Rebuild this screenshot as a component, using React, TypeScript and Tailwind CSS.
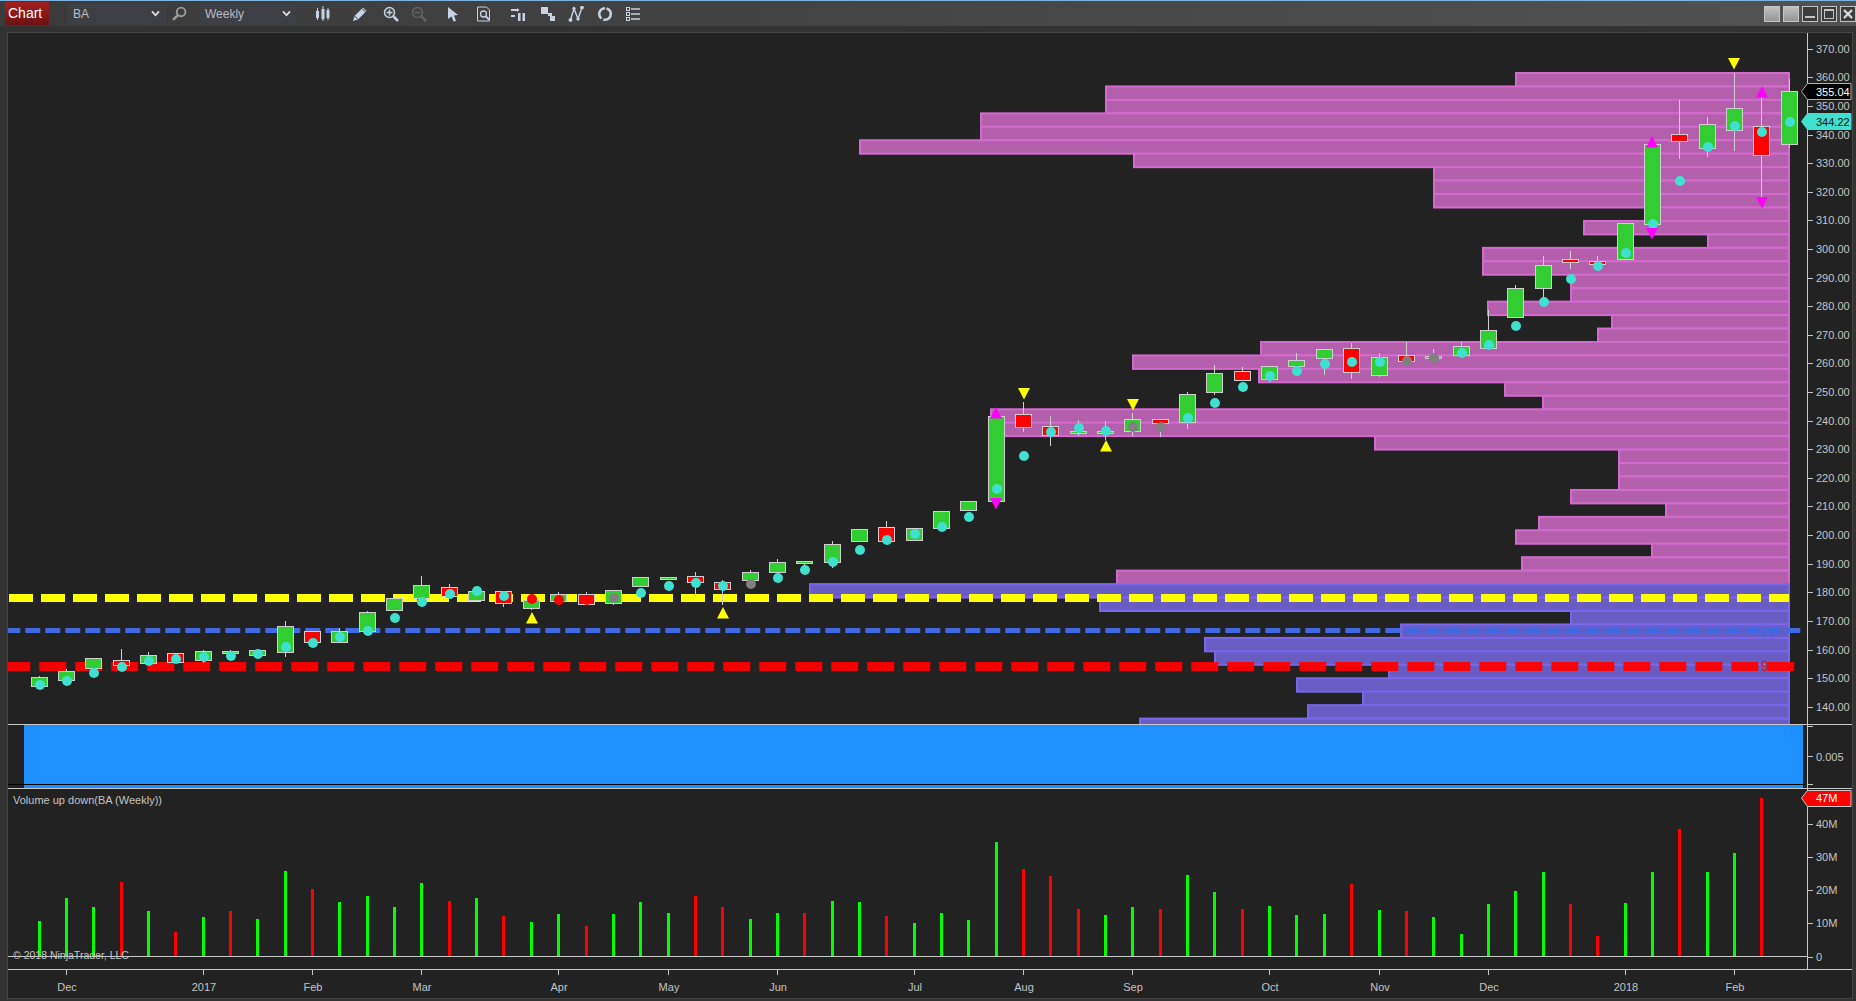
// Weekly BA chart, NinjaTrader dark skin
const FONT = "font-['Liberation_Sans',Arial,sans-serif]";

const candleX = (i: number) => Math.floor(39.1 + 27.345 * i);

const PROFILE_RIGHT = 1789;
const ROW = 13.45;
// left edge of each volume profile row, top to bottom; first 38 rows are up volume
const profileLefts = [
  1515, 1105, 1105, 980, 980, 859, 1133, 1433, 1433, 1433, 1650, 1583, 1707, 1482, 1482, 1570, 1570, 1487, 1611,
  1597, 1260, 1132, 1258, 1504, 1542, 990, 990, 1374, 1618, 1618, 1618, 1570, 1665, 1538, 1515, 1651, 1521, 1116,
  809, 1099, 1570, 1400, 1204, 1214, 1388, 1296, 1362, 1307, 1139,
];

type Candle = {
  t: number;
  b: number;
  wt?: number;
  wb?: number;
  c: "g" | "r";
  dot: number;
  dc?: string;
};

const candles: Candle[] = [
  { t: 677, b: 686, wt: 676, c: "g", dot: 685 },
  { t: 671, b: 680, wt: 669, c: "g", dot: 681 },
  { t: 658, b: 668, c: "g", dot: 673 },
  { t: 660, b: 665, wt: 649, c: "r", dot: 667 },
  { t: 655, b: 663, wt: 652, c: "g", dot: 661 },
  { t: 653, b: 662, c: "r", dot: 659 },
  { t: 651, b: 660, wt: 650, wb: 663, c: "g", dot: 657 },
  { t: 651, b: 653, wt: 650, c: "g", dot: 656 },
  { t: 650, b: 655, c: "g", dot: 654 },
  { t: 626, b: 652, wt: 621, wb: 657, c: "g", dot: 647 },
  { t: 631, b: 642, c: "r", dot: 643 },
  { t: 631, b: 642, wt: 628, wb: 643, c: "g", dot: 637 },
  { t: 612, b: 631, wt: 611, c: "g", dot: 631 },
  { t: 598, b: 610, c: "g", dot: 618 },
  { t: 585, b: 598, wt: 576, c: "g", dot: 602 },
  { t: 587, b: 596, wt: 584, c: "r", dot: 594 },
  { t: 591, b: 600, wb: 601, c: "g", dot: 591 },
  { t: 591, b: 603, wb: 607, c: "r", dot: 596 },
  { t: 600, b: 608, wb: 610, c: "g", dot: 599, dc: "#ff0000" },
  { t: 594, b: 601, wt: 592, c: "g", dot: 600, dc: "#ff0000" },
  { t: 594, b: 604, wt: 592, c: "r", dot: 600, dc: "#ff0000" },
  { t: 590, b: 603, wb: 605, c: "g", dot: 598, dc: "#808080" },
  { t: 577, b: 586, c: "g", dot: 593 },
  { t: 577, b: 579, c: "g", dot: 586 },
  { t: 576, b: 582, wt: 572, wb: 597, c: "r", dot: 583 },
  { t: 582, b: 589, wt: 580, wb: 605, c: "r", dot: 586 },
  { t: 572, b: 580, wt: 570, c: "g", dot: 584, dc: "#808080" },
  { t: 562, b: 572, wt: 559, c: "g", dot: 578 },
  { t: 561, b: 563, wt: 561, wb: 566, c: "g", dot: 570 },
  { t: 544, b: 562, wt: 541, wb: 568, c: "g", dot: 562 },
  { t: 529, b: 541, c: "g", dot: 550 },
  { t: 527, b: 541, wt: 521, c: "r", dot: 540 },
  { t: 528, b: 540, c: "g", dot: 534 },
  { t: 511, b: 528, c: "g", dot: 527 },
  { t: 501, b: 510, c: "g", dot: 517 },
  { t: 416, b: 501, c: "g", dot: 489 },
  { t: 414, b: 427, wt: 402, wb: 432, c: "r", dot: 456 },
  { t: 426, b: 435, wt: 416, wb: 446, c: "r", dot: 432 },
  { t: 431, b: 433, wt: 420, wb: 436, c: "g", dot: 428 },
  { t: 431, b: 433, wt: 421, wb: 440, c: "g", dot: 431 },
  { t: 419, b: 431, wt: 413, wb: 436, c: "g", dot: 427, dc: "#808080" },
  { t: 419, b: 423, wb: 437, c: "r", dot: 427, dc: "#808080" },
  { t: 394, b: 422, wt: 392, wb: 429, c: "g", dot: 418 },
  { t: 373, b: 392, wt: 365, wb: 395, c: "g", dot: 403 },
  { t: 371, b: 380, wt: 367, c: "r", dot: 387 },
  { t: 366, b: 379, wb: 382, c: "g", dot: 376 },
  { t: 360, b: 366, wt: 353, c: "g", dot: 371 },
  { t: 349, b: 358, wb: 375, c: "g", dot: 364 },
  { t: 348, b: 372, wt: 343, wb: 379, c: "r", dot: 362 },
  { t: 357, b: 375, wt: 353, wb: 377, c: "g", dot: 362 },
  { t: 355, b: 361, wt: 342, c: "r", dot: 361, dc: "#808080" },
  { t: 356, b: 358, wt: 349, wb: 361, c: "g", dot: 358, dc: "#808080" },
  { t: 346, b: 355, wt: 342, c: "g", dot: 353 },
  { t: 330, b: 348, wt: 310, c: "g", dot: 345 },
  { t: 288, b: 317, wt: 285, c: "g", dot: 326 },
  { t: 265, b: 288, wt: 256, wb: 298, c: "g", dot: 302 },
  { t: 259, b: 262, wt: 251, wb: 269, c: "r", dot: 279 },
  { t: 261, b: 264, wt: 256, c: "r", dot: 266 },
  { t: 223, b: 259, c: "g", dot: 253 },
  { t: 144, b: 224, c: "g", dot: 224 },
  { t: 134, b: 141, wt: 100, wb: 159, c: "r", dot: 181 },
  { t: 124, b: 148, wt: 117, wb: 157, c: "g", dot: 147 },
  { t: 108, b: 130, wt: 73, wb: 151, c: "g", dot: 126 },
  { t: 126, b: 155, wt: 97, wb: 197, c: "r", dot: 132 },
  { t: 91, b: 144, wt: 79, wb: 148, c: "g", dot: 122 },
];

type Marker = { x: number; y: number; up: boolean; fill: string };

const MAGENTA = "#ff00ff";
const YELLOW = "#ffff00";
const markers: Marker[] = [
  { x: 532, y: 612, up: true, fill: YELLOW },
  { x: 723, y: 607, up: true, fill: YELLOW },
  { x: 996, y: 407, up: true, fill: MAGENTA },
  { x: 996, y: 498, up: false, fill: MAGENTA },
  { x: 1024, y: 388, up: false, fill: YELLOW },
  { x: 1106, y: 440, up: true, fill: YELLOW },
  { x: 1133, y: 399, up: false, fill: YELLOW },
  { x: 1652, y: 136, up: true, fill: MAGENTA },
  { x: 1652, y: 228, up: false, fill: MAGENTA },
  { x: 1734, y: 58, up: false, fill: YELLOW },
  { x: 1762, y: 86, up: true, fill: MAGENTA },
  { x: 1762, y: 197, up: false, fill: MAGENTA },
];

// bar tops as read off the picture, in volume panel pixels
const volumes: [number, "g" | "r"][] = [
  [921, "g"], [898, "g"], [907, "g"], [882, "r"], [911, "g"], [932, "r"], [917, "g"], [911, "r"], [919, "g"], [871, "g"],
  [889, "r"], [902, "g"], [896, "g"], [907, "g"], [883, "g"], [901, "r"], [898, "g"], [916, "r"], [922, "g"], [914, "g"],
  [926, "r"], [914, "g"], [902, "g"], [913, "g"], [896, "r"], [907, "r"], [919, "g"], [913, "g"], [913, "r"], [901, "g"],
  [902, "g"], [916, "r"], [923, "g"], [913, "g"], [920, "g"], [842, "g"], [869, "r"], [876, "r"], [909, "r"], [915, "g"],
  [907, "g"], [909, "r"], [875, "g"], [892, "g"], [909, "r"], [906, "g"], [915, "g"], [914, "g"], [884, "r"], [910, "g"],
  [911, "r"], [917, "g"], [934, "g"], [904, "g"], [891, "g"], [872, "g"], [904, "r"], [936, "r"], [903, "g"], [872, "g"],
  [829, "r"], [872, "g"], [853, "g"], [798, "r"],
];

const priceLabels = [370, 360, 350, 340, 330, 320, 310, 300, 290, 280, 270, 260, 250, 240, 230, 220, 210, 200, 190, 180, 170, 160, 150, 140];
const priceY = (p: number) => Math.round(48.7 + (370 - p) * 2.861);

const months: [number, string][] = [
  [1, "Dec"], [6, "2017"], [10, "Feb"], [14, "Mar"], [19, "Apr"], [23, "May"], [27, "Jun"], [32, "Jul"], [36, "Aug"],
  [40, "Sep"], [45, "Oct"], [49, "Nov"], [53, "Dec"], [58, "2018"], [62, "Feb"],
];

const AXIS_X = 1807;
const AXIS_TEXT = "text-[11px] fill-[#c4c4c4]";

const PriceTag = ({ y, fill, stroke, text, color }: { y: number; fill: string; stroke: string; text: string; color: string }) => (
  <g>
    <path d={`M1801.5 ${y + 8} L1807.5 ${y} H1851 V${y + 16} H1807.5 Z`} fill={fill} stroke={stroke} />
    <text x={1816} y={y + 12} className={`text-[11px] ${color}`}>{text}</text>
  </g>
);

const PricePanel = () => (
  <svg viewBox="8 33 1844 691" className="block w-[1844px] h-[691px] shrink-0">
    {profileLefts.map((left, i) => (
      <rect
        key={i}
        x={left + 1}
        y={73 + ROW * i}
        width={PROFILE_RIGHT - left - 1}
        height={ROW}
        fill={i < 38 ? "#b45fac" : "#695cc2"}
        stroke={i < 38 ? "#d36bcf" : "#7a66ea"}
        strokeWidth={2}
      />
    ))}
    <text x={1754} y={636} className="text-[14px] fill-[#4169e1]">3pp</text>
    <text x={1761} y={671} className="text-[14px] fill-[#e01010]">9</text>
    <line x1={3.3} x2={1795} y1={666.5} y2={666.5} stroke="#ff0000" strokeWidth={9} strokeDasharray="27 9" className="opacity-95" />
    <line x1={5.3} x2={1801} y1={630.5} y2={630.5} stroke="#4169e1" strokeWidth={5} strokeDasharray="15 5" />
    <line x1={9} x2={1789} y1={598} y2={598} stroke="#ffff00" strokeWidth={8} strokeDasharray="24 8" />
    {candles.map((k, i) => {
      const x = candleX(i);
      return (
        <g key={i}>
          <line x1={x + 0.5} x2={x + 0.5} y1={k.wt ?? k.t} y2={k.wb ?? k.b} stroke="#cfcfcf" />
          <rect
            x={x - 8 + 0.5}
            y={k.t + 0.5}
            width={16}
            height={k.b - k.t}
            fill={k.c === "g" ? "#32cd32" : "#ff0000"}
            stroke="#cfcfcf"
          />
          <circle cx={x + 1} cy={k.dot} r={5} fill={k.dc ?? "#40e0d0"} />
        </g>
      );
    })}
    {markers.map((m, i) => (
      <polygon
        key={i}
        points={
          m.up
            ? `${m.x},${m.y} ${m.x + 6},${m.y + 11.5} ${m.x - 6},${m.y + 11.5}`
            : `${m.x - 6},${m.y} ${m.x + 6},${m.y} ${m.x},${m.y + 11.5}`
        }
        fill={m.fill}
      />
    ))}
    <line x1={AXIS_X + 0.5} x2={AXIS_X + 0.5} y1={33} y2={724} stroke="#c8c8c8" />
    {priceLabels.map((p) => (
      <g key={p}>
        <line x1={AXIS_X} x2={AXIS_X + 6} y1={priceY(p) + 0.5} y2={priceY(p) + 0.5} stroke="#c8c8c8" />
        <text x={1816} y={priceY(p) + 4} className={AXIS_TEXT}>{p}.00</text>
      </g>
    ))}
    <PriceTag y={83.5} fill="#000000" stroke="#b0b0b0" text="355.04" color="fill-white" />
    <PriceTag y={113.5} fill="#40e0d0" stroke="#40e0d0" text="344.22" color="fill-[#101010]" />
  </svg>
);

const IndicatorPanel = () => (
  <svg viewBox="8 724 1844 65" className="block w-[1844px] h-[65px] shrink-0">
    <rect x={24} y={725} width={1779} height={63} fill="#1e90ff" />
    <line x1={8} x2={1805} y1={784.5} y2={784.5} stroke="#000000" />
    <line x1={8} x2={1852} y1={724.5} y2={724.5} stroke="#c8c8c8" />
    <line x1={8} x2={1852} y1={788.5} y2={788.5} stroke="#c8c8c8" />
    <line x1={AXIS_X + 0.5} x2={AXIS_X + 0.5} y1={724} y2={789} stroke="#c8c8c8" />
    {[726.5, 756.5, 784.5].map((y) => (
      <line key={y} x1={AXIS_X} x2={AXIS_X + 6} y1={y} y2={y} stroke="#c8c8c8" />
    ))}
    <text x={1816} y={761} className={AXIS_TEXT}>0.005</text>
  </svg>
);

const VolumePanel = () => (
  <svg viewBox="8 789 1844 181" className="block w-[1844px] h-[181px] shrink-0">
    <text x={13} y={804} className="text-[11px] fill-[#c4c4c4]">Volume up down(BA (Weekly))</text>
    {volumes.map(([top, c], i) => (
      <rect key={i} x={candleX(i) - 1} y={top} width={3} height={957 - top} fill={c === "g" ? "#00ff00" : "#ff0000"} />
    ))}
    <line x1={8} x2={AXIS_X} y1={956.5} y2={956.5} stroke="#c8c8c8" />
    <text x={13} y={959} className="text-[10.5px] fill-[#c4c4c4]">© 2018 NinjaTrader, LLC</text>
    <line x1={8} x2={1852} y1={969.5} y2={969.5} stroke="#c8c8c8" />
    <line x1={AXIS_X + 0.5} x2={AXIS_X + 0.5} y1={789} y2={970} stroke="#c8c8c8" />
    {[["40M", 824], ["30M", 857], ["20M", 890], ["10M", 923], ["0", 957]].map(([t, y]) => (
      <g key={t}>
        <line x1={AXIS_X} x2={AXIS_X + 6} y1={Number(y) + 0.5} y2={Number(y) + 0.5} stroke="#c8c8c8" />
        <text x={1816} y={Number(y) + 4} className={AXIS_TEXT}>{t}</text>
      </g>
    ))}
    <path d="M1801.5 798 L1807.5 790.5 H1851 V806.5 H1807.5 Z" fill="#ff0000" stroke="#c8c8c8" />
    <text x={1816} y={802} className="text-[11px] fill-white">47M</text>
  </svg>
);

const TimeAxis = () => (
  <svg viewBox="8 970 1844 28" className="block w-[1844px] h-[28px] shrink-0">
    {months.map(([i, label], n) => (
      <g key={n}>
        <line x1={candleX(i) + 0.5} x2={candleX(i) + 0.5} y1={970} y2={975} stroke="#c8c8c8" />
        <text x={candleX(i) + 1} y={991} textAnchor="middle" className={AXIS_TEXT}>{label}</text>
      </g>
    ))}
  </svg>
);

const Select = ({ label, width }: { label: string; width: string }) => (
  <div className={`flex items-center justify-between h-[20px] bg-[#3d3f44] pl-[6px] pr-[6px] ${width}`}>
    <span className="text-[12px] text-[#b8bcc4]">{label}</span>
    <svg viewBox="0 0 10 8" className="w-[9px] h-[7px]">
      <path d="M1 1.5 L5 6 L9 1.5" fill="none" stroke="#e0e0e0" strokeWidth={2} />
    </svg>
  </div>
);

const ICON = "#c5d3e2";

const ToolIcons = () => (
  <>
    <svg viewBox="0 0 16 16" className="w-4 h-4 ml-[18px]" fill={ICON} stroke={ICON}>
      <path d="M2.5 2v12M8 0v15M13 2v12" strokeWidth={1} />
      <rect x="1" y="5" width="3" height="7" stroke="none" />
      <rect x="6.5" y="3" width="3" height="10" stroke="none" />
      <rect x="11.5" y="4" width="3" height="8" stroke="none" />
    </svg>
    <svg viewBox="0 0 16 16" className="w-4 h-4 ml-[21px]" fill={ICON}>
      <path d="M1 15 L2.5 10 L11 1.5 L14.5 5 L6 13.5 Z" />
      <path d="M2.5 10 L6 13.5" stroke="#3f3f3f" strokeWidth={1} />
      <path d="M10 2.5 L13.5 6" stroke="#3f3f3f" strokeWidth={1} />
    </svg>
    <svg viewBox="0 0 16 16" className="w-4 h-4 ml-[15px]" fill="none" stroke={ICON}>
      <circle cx="6.5" cy="6.5" r="5" strokeWidth={1.5} />
      <path d="M6.5 3.5v6M3.5 6.5h6" strokeWidth={1.5} />
      <path d="M10.5 10.5 L15 15" strokeWidth={2.5} />
    </svg>
    <svg viewBox="0 0 16 16" className="w-4 h-4 ml-[12px]" fill="none" stroke="#5f6264">
      <circle cx="6.5" cy="6.5" r="5" strokeWidth={1.5} />
      <path d="M3.5 6.5h6" strokeWidth={1.5} />
      <path d="M10.5 10.5 L15 15" strokeWidth={2.5} />
    </svg>
    <svg viewBox="0 0 16 16" className="w-4 h-4 ml-[18px]" fill={ICON}>
      <path d="M3 1 L13 9 L9 9.5 L11 15 L8.5 15.5 L6.5 10.5 L3 13 Z" />
    </svg>
    <svg viewBox="0 0 16 16" className="w-4 h-4 ml-[15px]" fill="none" stroke={ICON}>
      <path d="M1.5 1 H10.5 L13.5 4 V15 H1.5 Z" strokeWidth={1} />
      <circle cx="7.5" cy="8" r="3" strokeWidth={1.3} />
      <path d="M9.5 10 L13 13.5" strokeWidth={1.8} />
    </svg>
    <svg viewBox="0 0 16 16" className="w-4 h-4 ml-[18px]" fill={ICON}>
      <rect x="1" y="3" width="6" height="2" />
      <path d="M7 2 L9.5 4 L7 6 Z" />
      <rect x="1" y="9" width="4" height="2" />
      <rect x="8" y="7" width="2.5" height="8" />
      <rect x="12.5" y="7" width="2.5" height="8" />
    </svg>
    <svg viewBox="0 0 16 16" className="w-4 h-4 ml-[14px]" fill={ICON}>
      <rect x="1" y="1" width="7" height="7" />
      <rect x="8" y="7" width="4" height="3" />
      <rect x="10" y="10" width="5" height="5" />
    </svg>
    <svg viewBox="0 0 16 16" className="w-4 h-4 ml-[12px]" fill={ICON} stroke={ICON}>
      <path d="M2.5 14 L6 2.5 L10 13 L14 1.5" fill="none" strokeWidth={1.4} />
      <circle cx="2.5" cy="14" r="1.5" />
      <circle cx="6" cy="2.5" r="1.2" />
      <circle cx="10" cy="13" r="1.2" />
      <circle cx="14" cy="1.5" r="1.5" />
    </svg>
    <svg viewBox="0 0 16 16" className="w-4 h-4 ml-[13px]" fill="none" stroke={ICON}>
      <path d="M8 2.2 A5.8 5.8 0 1 0 8 13.8 A5.8 5.8 0 1 0 8 2.2" strokeWidth={2.6} strokeDasharray="14 2 18 2" />
    </svg>
    <svg viewBox="0 0 16 16" className="w-4 h-4 ml-[12px]" fill="none" stroke={ICON}>
      <rect x="1.5" y="1.5" width="3" height="3" />
      <rect x="1.5" y="6.5" width="3" height="3" />
      <rect x="1.5" y="11.5" width="3" height="3" />
      <path d="M6 3h9M6 8h9M6 13h9" strokeWidth={1.6} />
    </svg>
  </>
);

const WinButton = ({ children, filled }: { children?: React.ReactNode; filled?: boolean }) => (
  <div
    className={`flex items-center justify-center w-[16px] h-[16px] border border-[#c4c4c4] ${
      filled ? "bg-gradient-to-b from-[#c0c0c0] to-[#969696]" : "bg-[#3c3c3c]"
    }`}
  >
    {children}
  </div>
);

const Toolbar = () => (
  <div className="flex items-center h-[26px] shrink-0 border-t border-[#7fb2dc] bg-gradient-to-r from-[#3a3a3a] to-[#525252] pl-[5px] pr-0">
    <div className="flex items-center w-[44px] h-[23px] pl-[3px] bg-gradient-to-b from-[#a52020] to-[#6d1212]">
      <span className="text-[14px] text-white">Chart</span>
    </div>
    <div className="w-[18px]" />
    <Select label="BA" width="w-[99px]" />
    <svg viewBox="0 0 14 14" className="w-[15px] h-[15px] ml-[6px]" fill="none" stroke="#9a9a9a">
      <circle cx="8.5" cy="5.5" r="4" strokeWidth={1.8} />
      <path d="M5.5 8.5 L1 13" strokeWidth={2.4} />
    </svg>
    <div className="w-[12px]" />
    <Select label="Weekly" width="w-[98px]" />
    <ToolIcons />
    <div className="flex-1" />
    <div className="flex items-center gap-[3px]">
      <WinButton filled />
      <WinButton filled />
      <WinButton>
        <div className="w-[10px] h-[2px] bg-[#c4c4c4] mt-[7px]" />
      </WinButton>
      <WinButton>
        <div className="w-[10px] h-[10px] border border-t-2 border-[#c4c4c4]" />
      </WinButton>
      <WinButton>
        <svg viewBox="0 0 12 12" className="w-[12px] h-[12px]">
          <path d="M2 2 L10 10 M10 2 L2 10" stroke="#d8d8d8" strokeWidth={2.4} />
        </svg>
      </WinButton>
    </div>
  </div>
);

export default function App() {
  return (
    <div className={`flex flex-col w-[1856px] h-[1001px] overflow-hidden bg-[#323232] ${FONT}`}>
      <Toolbar />
      <div className="flex-1 pt-[6px] pl-[7px] pr-[3px]">
        <div className="flex flex-col w-[1846px] border border-[#454545] bg-[#222222]">
          <PricePanel />
          <IndicatorPanel />
          <VolumePanel />
          <TimeAxis />
        </div>
      </div>
    </div>
  );
}
